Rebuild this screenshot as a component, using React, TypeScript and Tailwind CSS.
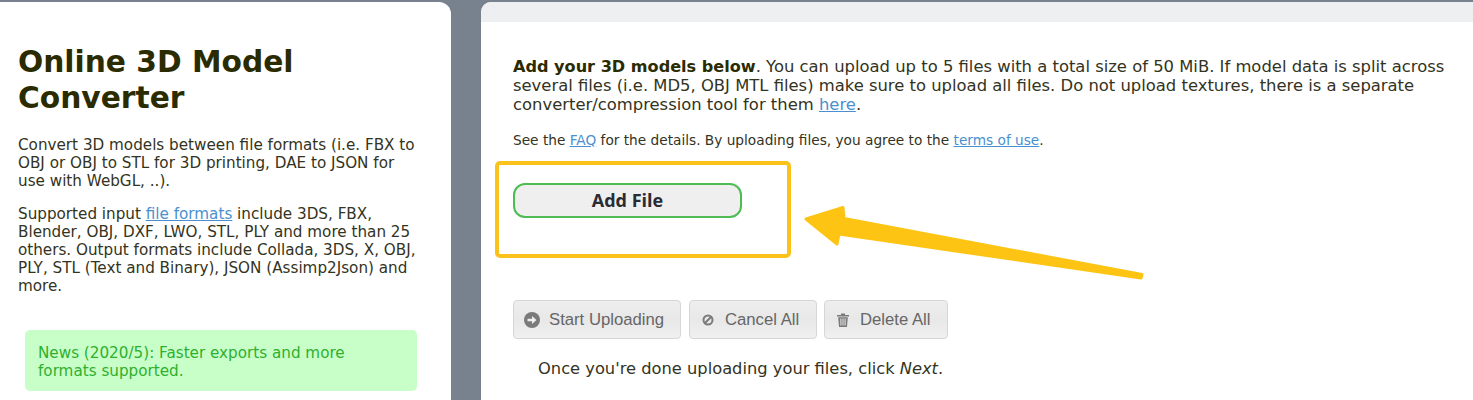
const font = "font-['DejaVu_Sans',sans-serif]";

function Card({ className, children }: { className: string; children: React.ReactNode }) {
  return <div className={`bg-white overflow-hidden ${className}`}>{children}</div>;
}

function ToolButton({ label, icon, width }: { label: string; icon: React.ReactNode; width: string }) {
  return (
    <button
      className={`${width} h-[39px] flex items-center gap-[9px] pl-[10px] rounded-[4px] border border-[#d6d6d6] bg-gradient-to-b from-[#eeeeee] via-[#e8e8e8] to-[#f0f0f0] text-[16.7px] text-[#666666] font-['Liberation_Sans',sans-serif]`}
    >
      {icon}
      <span>{label}</span>
    </button>
  );
}

function ArrowAnnotation() {
  return (
    <svg className="absolute left-[800px] top-[200px]" width="346" height="82" viewBox="0 0 346 82">
      <path
        d="M6 19 L43 7.5 L44 18.5 L342 74.5 L341 78 L39 34 L37 44 Z"
        fill="#fdc414"
        stroke="#fdc414"
        strokeWidth="3"
        strokeLinejoin="round"
      />
    </svg>
  );
}

export default function App() {
  return (
    <div className={`relative h-[400px] w-[1473px] overflow-hidden bg-[#78828e] pt-[2px] flex gap-[30px] ${font}`}>
      <Card className="w-[451px] rounded-tr-[12px] pl-[18px] pr-[30px] pt-[42px] text-[#333322]">
        <h1 className="text-[29.7px] leading-[36px] font-bold text-[#2b2b00]">Online 3D Model Converter</h1>
        <p className="mt-[20px] text-[15.2px] leading-[18px]">
          Convert 3D models between file formats (i.e. FBX to OBJ or OBJ to STL for 3D printing, DAE to JSON for use with WebGL, ..).
        </p>
        <p className="mt-[15px] text-[15.2px] leading-[18px]">
          Supported input <a className="text-[#4a90d0] underline">file formats</a> include 3DS, FBX, Blender, OBJ, DXF, LWO, STL, PLY and more than 25 others. Output formats include Collada, 3DS, X, OBJ, PLY, STL (Text and Binary), JSON (Assimp2Json) and more.
        </p>
        <div className="mt-[35px] ml-[7px] w-[392px] h-[61px] rounded-[5px] bg-[#c8ffc8] px-[13px] pt-[14px] text-[15.2px] leading-[18px] text-[#2eb02e]">
          News (2020/5): Faster exports and more formats supported.
        </div>
      </Card>

      <Card className="flex-1 rounded-tl-[10px] text-[#333322]">
        <div className="h-[20px] bg-[#eeeff0]" />
        <div className="pl-[32px] pr-[20px] pt-[35px]">
          <p className="text-[16.4px] leading-[19px]">
            <b className="text-[16.1px] text-[#2b2b00]">Add your 3D models below</b>. You can upload up to 5 files with a total size of 50 MiB. If model data is split across several files (i.e. MD5, OBJ MTL files) make sure to upload all files. Do not upload textures, there is a separate converter/compression tool for them <a className="text-[#4a90d0] underline">here</a>.
          </p>
          <p className="mt-[17px] text-[13.7px] leading-[18px]">
            See the <a className="text-[#4a90d0] underline">FAQ</a> for the details. By uploading files, you agree to the <a className="text-[#4a90d0] underline">terms of use</a>.
          </p>
          <div className="mt-[12px] -ml-[18px] w-[296px] h-[97px] rounded-[5px] border-[4px] border-[#fcc21c] pl-[14px] pt-[18px]">
            <button className="w-[229px] h-[35px] rounded-[12px] border-2 border-[#4fbb55] bg-[#efefef] text-[18px] font-bold text-[#2b2b33] font-['Open_Sans',sans-serif]">
              Add File
            </button>
          </div>
          <div className="mt-[42px] flex gap-[8px]">
            <ToolButton
              width="w-[168px]"
              label="Start Uploading"
              icon={
                <svg width="16" height="16" viewBox="0 0 16 16">
                  <circle cx="8" cy="8" r="8" fill="#7a7a7a" />
                  <path d="M3.5 6.7h4.5V4l4.5 4-4.5 4V9.3H3.5z" fill="#eeeeee" />
                </svg>
              }
            />
            <ToolButton
              width="w-[128px]"
              label="Cancel All"
              icon={
                <svg className="ml-[2px] mr-[2px]" width="12" height="12" viewBox="0 0 12 12" fill="none" stroke="#7a7a7a" strokeWidth="2">
                  <circle cx="6" cy="6" r="4.5" />
                  <path d="M3 9L9 3" />
                </svg>
              }
            />
            <ToolButton
              width="w-[124px] -ml-[1px]"
              label="Delete All"
              icon={
                <svg className="ml-[2px] mr-[2px]" width="12" height="14" viewBox="0 0 12 14" fill="#7a7a7a">
                  <path d="M0 2h12v1.4H0zM4 .5h4V2H4zM1.2 4.2h9.6L10 14H2zM3.4 5.5v7h1v-7zM5.5 5.5v7h1v-7zM7.6 5.5v7h1v-7z" fillRule="evenodd" />
                </svg>
              }
            />
          </div>
          <p className="mt-[20px] ml-[25px] text-[16.3px] leading-[19px]">
            Once you're done uploading your files, click <i>Next</i>.
          </p>
        </div>
      </Card>

      <ArrowAnnotation />
    </div>
  );
}
